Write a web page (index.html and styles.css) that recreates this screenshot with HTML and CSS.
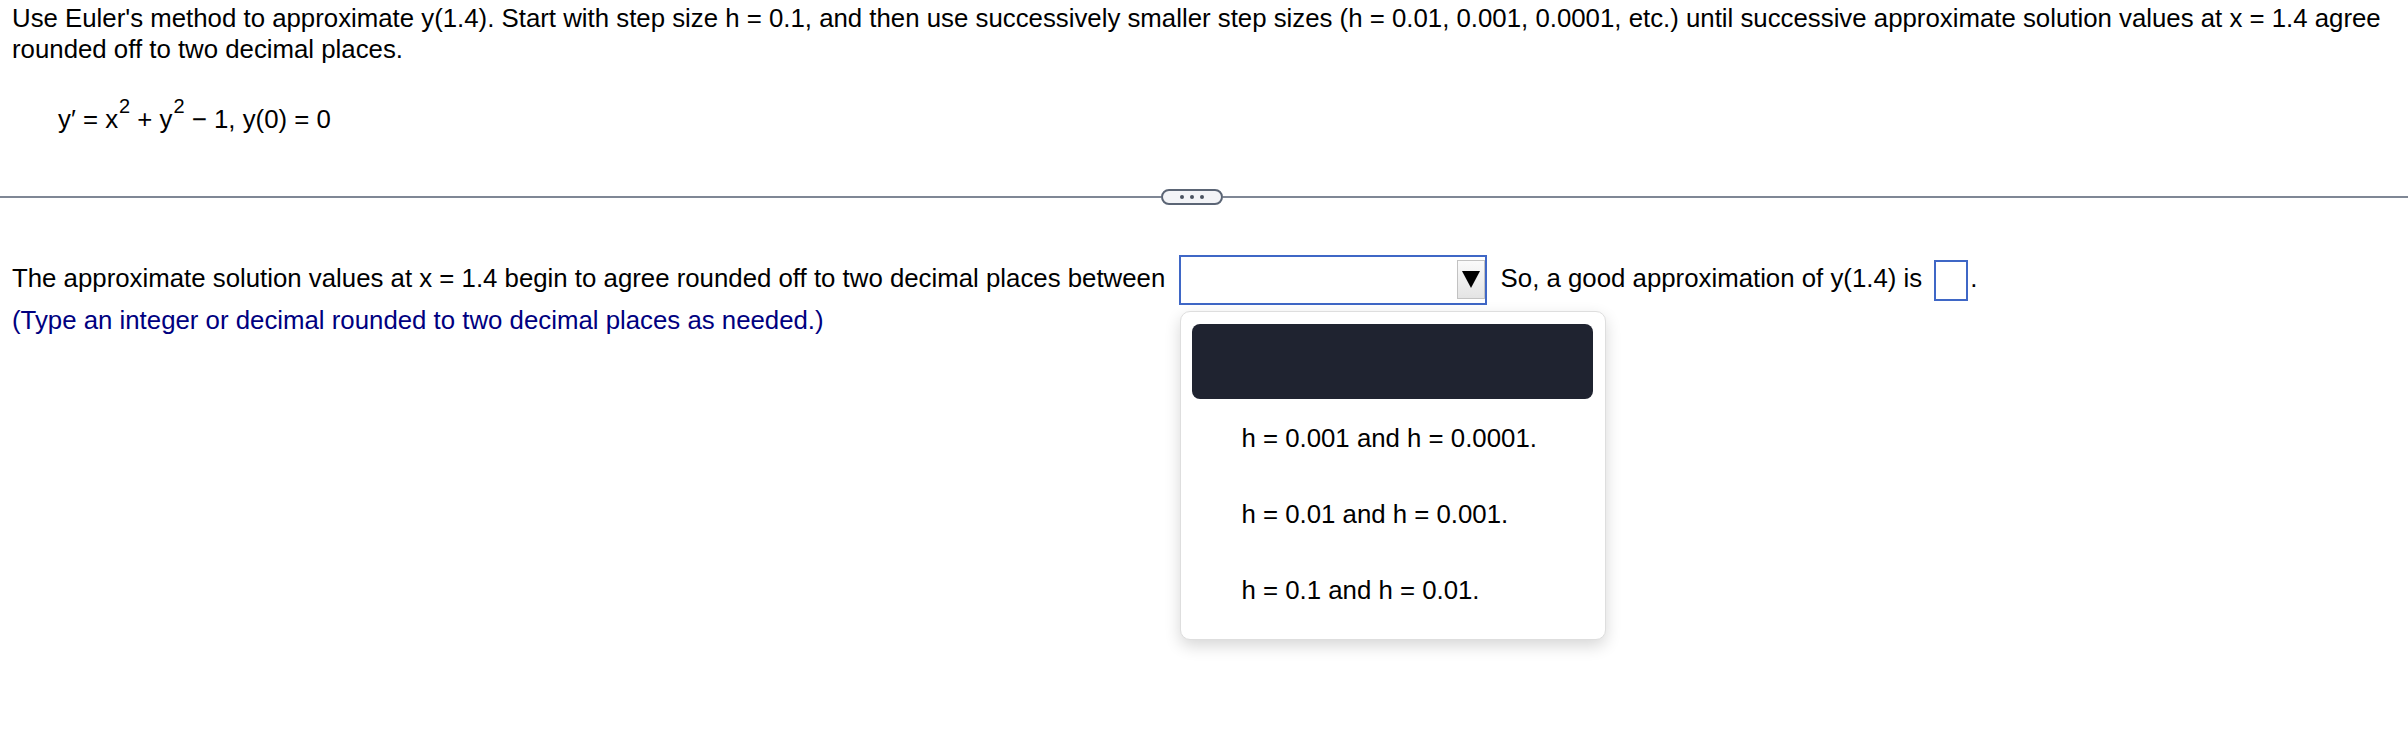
FILE: index.html
```html
<!DOCTYPE html>
<html lang="en">

<head>
  <meta charset="UTF-8" />
  <title>Euler's Method</title>
  <link rel="stylesheet" href="styles.css">
</head>

<body>
  <div class="page">

    <!-- Question -->
    <div class="question">
      <p class="prompt">Use Euler's method to approximate y(1.4). Start with step size h = 0.1, and then use successively smaller step sizes (h = 0.01, 0.001, 0.0001, etc.) until successive approximate solution values at x = 1.4 agree rounded off to two decimal places.</p>
      <p class="equation">y&prime; = x<sup>2</sup> + y<sup>2</sup> &minus; 1, y(0) = 0</p>
    </div>

    <!-- Divider -->
    <div class="divider">
      <span class="line"></span>
      <span class="pill"><i></i><i></i><i></i></span>
      <span class="line line-right"></span>
    </div>

    <!-- Answer -->
    <div class="answer">
      <div class="answer-line">The approximate solution values at x = 1.4 begin to agree rounded off to two decimal places between
        <div class="select">
          <span class="select-btn">
            <svg width="18" height="17" viewBox="0 0 18 17"><polygon points="0,0 18,0 9,17" fill="#000" /></svg>
          </span>
          <ul class="menu">
            <li class="menu-item active"></li>
            <li class="menu-item">h = 0.001 and h = 0.0001.</li>
            <li class="menu-item">h = 0.01 and h = 0.001.</li>
            <li class="menu-item">h = 0.1 and h = 0.01.</li>
          </ul>
        </div>
        So, a good approximation of y(1.4) is <span class="answer-box"></span>.
      </div>
      <p class="hint">(Type an integer or decimal rounded to two decimal places as needed.)</p>
    </div>

  </div>
</body>

</html>
```

FILE: styles.css
```css
* {
  box-sizing: border-box;
  margin: 0;
  padding: 0;
}

html,
body {
  font-family: 'Liberation Sans', Arial, sans-serif;
  font-size: 25.8px;
  background-color: #fff;
  color: #000;
}

body {
  min-height: 744px;
}

.page {
  padding: 3px 0 0 12px;
  min-height: 744px;
}

.prompt {
  line-height: 31px;
  margin-right: -12px;
}

.equation {
  margin-top: 39px;
  margin-left: 46px;
  line-height: 31px;
}

.equation sup {
  font-size: 20px;
  line-height: 0;
  vertical-align: 15px;
  margin-left: 1px;
}

/* Divider with the "..." pill */
.divider {
  display: flex;
  align-items: center;
  margin: 54px 0 0 -12px;
  height: 16px;
}

.divider .line {
  flex: 1 1 0;
  height: 2px;
  background-color: #7f8795;
}

.divider .line-right {
  flex-basis: 24px;
}

.pill {
  width: 62px;
  height: 16px;
  border: 2px solid #5b6575;
  border-radius: 8px;
  background-color: #f3f4f7;
  display: flex;
  justify-content: center;
  align-items: center;
  gap: 6px;
}

.pill i {
  width: 4px;
  height: 4px;
  border-radius: 50%;
  background-color: #4b5361;
}

.answer {
  margin-top: 50px;
}

.answer-line {
  line-height: 31px;
}

.select {
  display: inline-flex;
  position: relative;
  justify-content: flex-end;
  align-items: center;
  width: 308px;
  height: 50px;
  margin: 0 6px 0 7px;
  border: 2px solid #3f67c6;
  vertical-align: middle;
  background-color: #fff;
}

.select-btn {
  width: 28px;
  height: 39px;
  border: 1px solid #c2c2c2;
  background: linear-gradient(#fafafa, #e4e4e4);
  display: flex;
  justify-content: center;
  align-items: center;
  margin-top: -1px;
}

.menu {
  position: absolute;
  top: 54px;
  left: -1px;
  width: 426px;
  padding: 12px 12px 11px 11px;
  list-style: none;
  background-color: #fff;
  border: 1px solid #dedede;
  border-radius: 10px;
  box-shadow: 0 6px 16px rgba(0, 0, 0, 0.16);
  z-index: 5;
}

.menu-item {
  height: 76px;
  padding-left: 49px;
  display: flex;
  align-items: center;
  white-space: nowrap;
  font-size: 25.8px;
}

.menu-item.active {
  height: 75px;
  margin-bottom: 1px;
  background-color: #1f2330;
  border-radius: 8px;
}

.answer-box {
  display: inline-block;
  width: 34px;
  height: 41px;
  margin-left: 5px;
  margin-right: 2px;
  border: 2px solid #3f67c6;
  vertical-align: middle;
}

.hint {
  color: #000080;
  line-height: 31px;
}
```
